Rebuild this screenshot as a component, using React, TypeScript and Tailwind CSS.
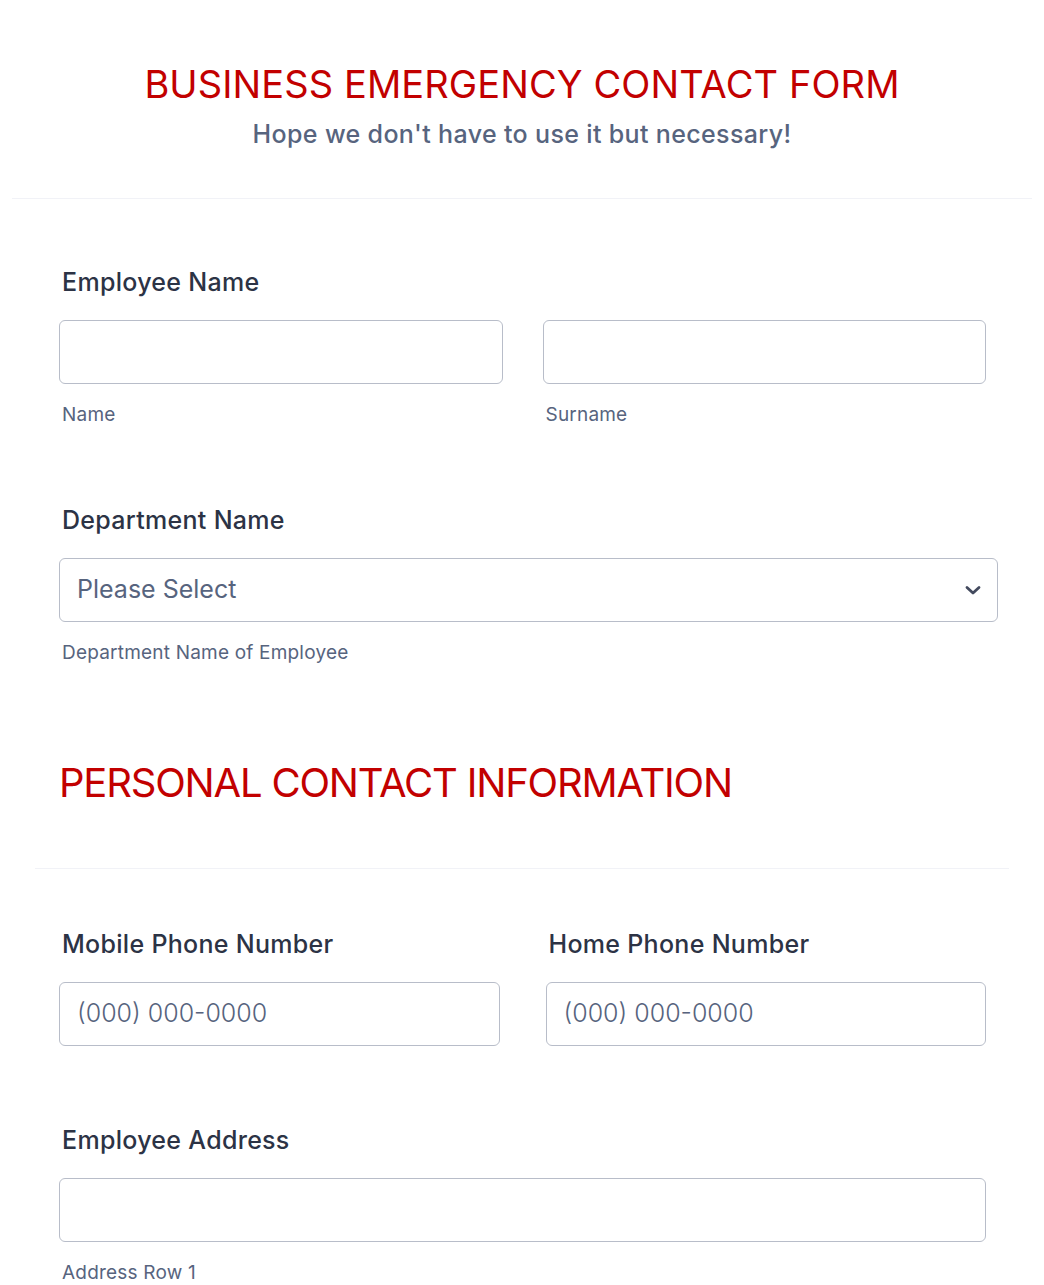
import React from "react";

const font = { fontFamily: "Inter, 'Noto Sans', sans-serif" };

function TextBox({ className = "", placeholder }: { className?: string; placeholder?: string }) {
  return (
    <div
      className={`h-[64px] rounded-[6px] border border-[#b8bdc9] bg-white flex items-center px-[17px] text-[25px] font-light text-[#57647e] ${className}`}
    >
      {placeholder}
    </div>
  );
}

function Label({ children }: { children: React.ReactNode }) {
  return (
    <div className="text-[25px] font-medium text-[#2c3345] leading-none pl-[3px] tracking-[0.3px]">{children}</div>
  );
}

function Sub({ children }: { children: React.ReactNode }) {
  return (
    <div className="text-[19px] text-[#57647e] leading-none pl-[3px] mt-[21px] tracking-[0.2px]">{children}</div>
  );
}

export default function App() {
  return (
    <div className="w-[1044px] h-[1285px] bg-white overflow-hidden" style={font}>
      {/* header */}
      <div className="pt-[65px] flex flex-col items-center">
        <h1 className="text-[38px] leading-none text-[#c20000] tracking-[0.1px]">BUSINESS EMERGENCY CONTACT FORM</h1>
        <p className="mt-[19px] text-[25px] leading-none text-[#57647e] font-medium tracking-[0.35px]">
          Hope we don't have to use it but necessary!
        </p>
      </div>
      <div className="mx-[12px] mt-[51px] h-px bg-[#f1f2f7]" />

      <div className="px-[59px]">
        {/* employee name */}
        <div className="mt-[71px]">
          <Label>Employee Name</Label>
          <div className="mt-[25px] flex gap-[40px] w-[927px]">
            <div className="flex-1">
              <TextBox />
              <Sub>Name</Sub>
            </div>
            <div className="flex-1">
              <TextBox />
              <Sub>Surname</Sub>
            </div>
          </div>
        </div>

        {/* department */}
        <div className="mt-[84px]">
          <Label>Department Name</Label>
          <div className="mt-[25px] w-[939px] h-[64px] rounded-[6px] border border-[#b8bdc9] flex items-center justify-between px-[17px] pr-[15px]">
            <span className="text-[25px] text-[#57647e]">Please Select</span>
            <svg width="18" height="12" viewBox="0 0 18 12" fill="none">
              <path d="M3 3.5 L9 9 L15 3.5" stroke="#434a5e" strokeWidth="2.8" strokeLinecap="round" strokeLinejoin="round" />
            </svg>
          </div>
          <Sub>Department Name of Employee</Sub>
        </div>

        {/* personal contact section */}
        <h2 className="mt-[101px] text-[40px] leading-none text-[#c20000] tracking-[-1.2px]">PERSONAL CONTACT INFORMATION</h2>
      </div>
      <div className="mx-[35px] mt-[65px] h-px bg-[#f1f2f7]" />

      <div className="px-[59px]">
        <div className="mt-[63px] flex gap-[46px] w-[927px]">
          <div className="flex-1">
            <Label>Mobile Phone Number</Label>
            <TextBox className="mt-[25px]" placeholder="(000) 000-0000" />
          </div>
          <div className="flex-1">
            <Label>Home Phone Number</Label>
            <TextBox className="mt-[25px]" placeholder="(000) 000-0000" />
          </div>
        </div>

        <div className="mt-[82px]">
          <Label>Employee Address</Label>
          <TextBox className="mt-[25px] w-[927px]" />
          <Sub>Address Row 1</Sub>
        </div>
      </div>
    </div>
  );
}
